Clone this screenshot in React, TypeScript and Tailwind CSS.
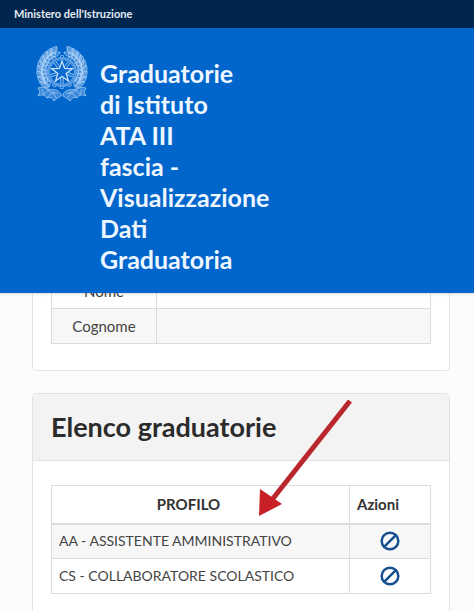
import { Ban } from "lucide-react";

const titleLines = [
  "Graduatorie",
  "di Istituto",
  "ATA III",
  "fascia -",
  "Visualizzazione",
  "Dati",
  "Graduatoria",
];

const graduatorie = [
  { code: "AA", label: "ASSISTENTE AMMINISTRATIVO" },
  { code: "CS", label: "COLLABORATORE SCOLASTICO" },
];

// Angles of the leaf pairs along one branch of the wreath
const leafAngles = [-62, -49, -36, -23, -10, 3, 16, 29, 42];
const toothAngles = [0, 30, 60, 90, 120, 150, 180, 210, 240, 270, 300, 330];
const spokeAngles = [0, 72, 144, 216, 288];

function Branch() {
  return (
    <g>
      <path d="M31 5 C50 9 54 34 35 50" stroke="#7fb3ec" strokeWidth="3" opacity="0.45" />
      {leafAngles.map((angle) => (
        <g key={angle} transform={`rotate(${angle} 26 27)`}>
          <path d="M46 30 C44 27 46 21 50 20 C52 24 50 29 46 30 Z" fill="#8dbcf0" fillOpacity="0.4" />
          <path d="M46 30 C41 29 41 24 43 20 C46 22 47 26 46 30 Z" fill="#8dbcf0" fillOpacity="0.25" />
        </g>
      ))}
    </g>
  );
}

function Ribbon() {
  return (
    <g>
      <path
        d="M27 50 C31 45 35 45 39 46 C43 43 47 43 50 44 L48 48 L50 52 C46 50 43 51 41 54 C38 52 36 54 34 57 C31 54 29 53 27 52 Z"
        fill="#8dbcf0"
        fillOpacity="0.4"
      />
      <path d="M30 50 C34 47 38 50 41 54 M39 46 L44 50 M46 45 L44 51 M35 47 L32 54" opacity="0.85" />
    </g>
  );
}

function Emblem() {
  return (
    <svg
      viewBox="0 0 52 58"
      className="h-[58px] w-[52px] shrink-0"
      fill="none"
      stroke="#b9d8f8"
      strokeWidth="0.7"
      role="img"
      aria-label="Repubblica Italiana"
    >
      <Branch />
      <Ribbon />
      <g transform="translate(52 0) scale(-1 1)">
        <Branch />
        <Ribbon />
      </g>
      <circle cx="26" cy="28" r="14" stroke="#7fb3ec" strokeWidth="2.2" opacity="0.7" />
      <circle cx="26" cy="28" r="12.5" opacity="0.7" />
      {toothAngles.map((angle) => (
        <path
          key={angle}
          d="M24.5 13.5 V11.5 H27.5 V13.5"
          transform={`rotate(${angle} 26 28)`}
          opacity="0.8"
        />
      ))}
      {spokeAngles.map((angle) => (
        <path
          key={angle}
          d="M24.8 40 V33 M27.2 40 V33"
          transform={`rotate(${angle} 26 28)`}
          strokeWidth="0.9"
          opacity="0.85"
        />
      ))}
      <path
        d="M26 17 L28.6 24.4 L36.5 24.6 L30.2 29.4 L32.5 36.9 L26 32.4 L19.5 36.9 L21.8 29.4 L15.5 24.6 L23.4 24.4 Z"
        fill="#0b6bd0"
        stroke="#d0e6fd"
        strokeWidth="1.2"
      />
    </svg>
  );
}

function Arrow() {
  return (
    <svg
      viewBox="0 0 94 118"
      className="pointer-events-none absolute top-[6px] left-[226px] h-[118px] w-[94px]"
      aria-hidden="true"
    >
      <path d="M91 1 L12 101" stroke="#b9272d" strokeWidth="5" />
      <path d="M0 116 L1 89 L23 104 Z" fill="#c92027" />
    </svg>
  );
}

export default function App() {
  return (
    <div className="flex min-h-screen flex-col bg-[#fcfcfc] font-['Lato',sans-serif] text-[#444]">
      <header className="sticky top-0 z-10 shadow-sm">
        <div className="bg-[#00264d] px-3.5 py-1.5 text-[11px] leading-4 font-bold text-[#e6ecf2]">
          Ministero dell'Istruzione
        </div>
        <div className="flex gap-3 bg-[#0066cc] px-9 pt-4 pb-[18px]">
          <Emblem />
          <h1 className="pt-3.5 text-[25px] leading-[31px] font-bold text-[#eef6ff]">
            {titleLines.map((line) => (
              <span key={line} className="block">
                {line}
              </span>
            ))}
          </h1>
        </div>
      </header>

      <main className="-mt-5 flex flex-1 flex-col gap-[22px] pr-6 pl-8">
        <section className="rounded-b-[5px] border border-t-0 border-[#e2e2e2] bg-white px-[18px] pb-[26px]">
          <table className="w-full table-fixed border-collapse text-center text-[15px] leading-6">
            <tbody>
              <tr className="h-[35px]">
                <th scope="row" className="w-[105px] border border-[#dcdcdc] font-normal">
                  Nome
                </th>
                <td className="border border-[#dcdcdc]"></td>
              </tr>
              <tr className="h-[35px] bg-[#f7f7f7]">
                <th scope="row" className="border border-[#dcdcdc] font-normal">
                  Cognome
                </th>
                <td className="border border-[#dcdcdc]"></td>
              </tr>
            </tbody>
          </table>
        </section>

        <section className="relative flex-1 rounded-t-[5px] border border-b-0 border-[#e2e2e2] bg-white">
          <h2 className="rounded-t-[5px] border-b border-[#e2e2e2] bg-[#f3f3f3] px-[18px] py-4 text-[27px] leading-[34px] font-bold text-[#2b2b2b]">
            Elenco graduatorie
          </h2>
          <div className="px-[18px] pt-6 pb-3">
            <table className="w-full table-fixed border-collapse text-[14px] leading-6">
              <thead>
                <tr className="h-[38px] text-[15px] text-[#333]">
                  <th scope="col" className="border border-b-2 border-[#dcdcdc] pr-6">
                    PROFILO
                  </th>
                  <th scope="col" className="w-[81px] border border-b-2 border-[#dcdcdc] px-[7px] text-left">
                    Azioni
                  </th>
                </tr>
              </thead>
              <tbody>
                {graduatorie.map((item) => (
                  <tr key={item.code} className="h-[35px] odd:bg-[#f7f7f7]">
                    <td className="border border-[#dcdcdc] px-[7px] whitespace-nowrap">
                      {item.code} - {item.label}
                    </td>
                    <td className="border border-[#dcdcdc]">
                      <button type="button" aria-label={`Annulla ${item.label}`} className="mx-auto block">
                        <Ban className="size-5 rotate-90 text-[#17518f]" strokeWidth={3} />
                      </button>
                    </td>
                  </tr>
                ))}
              </tbody>
            </table>
          </div>
          <Arrow />
        </section>
      </main>
    </div>
  );
}
